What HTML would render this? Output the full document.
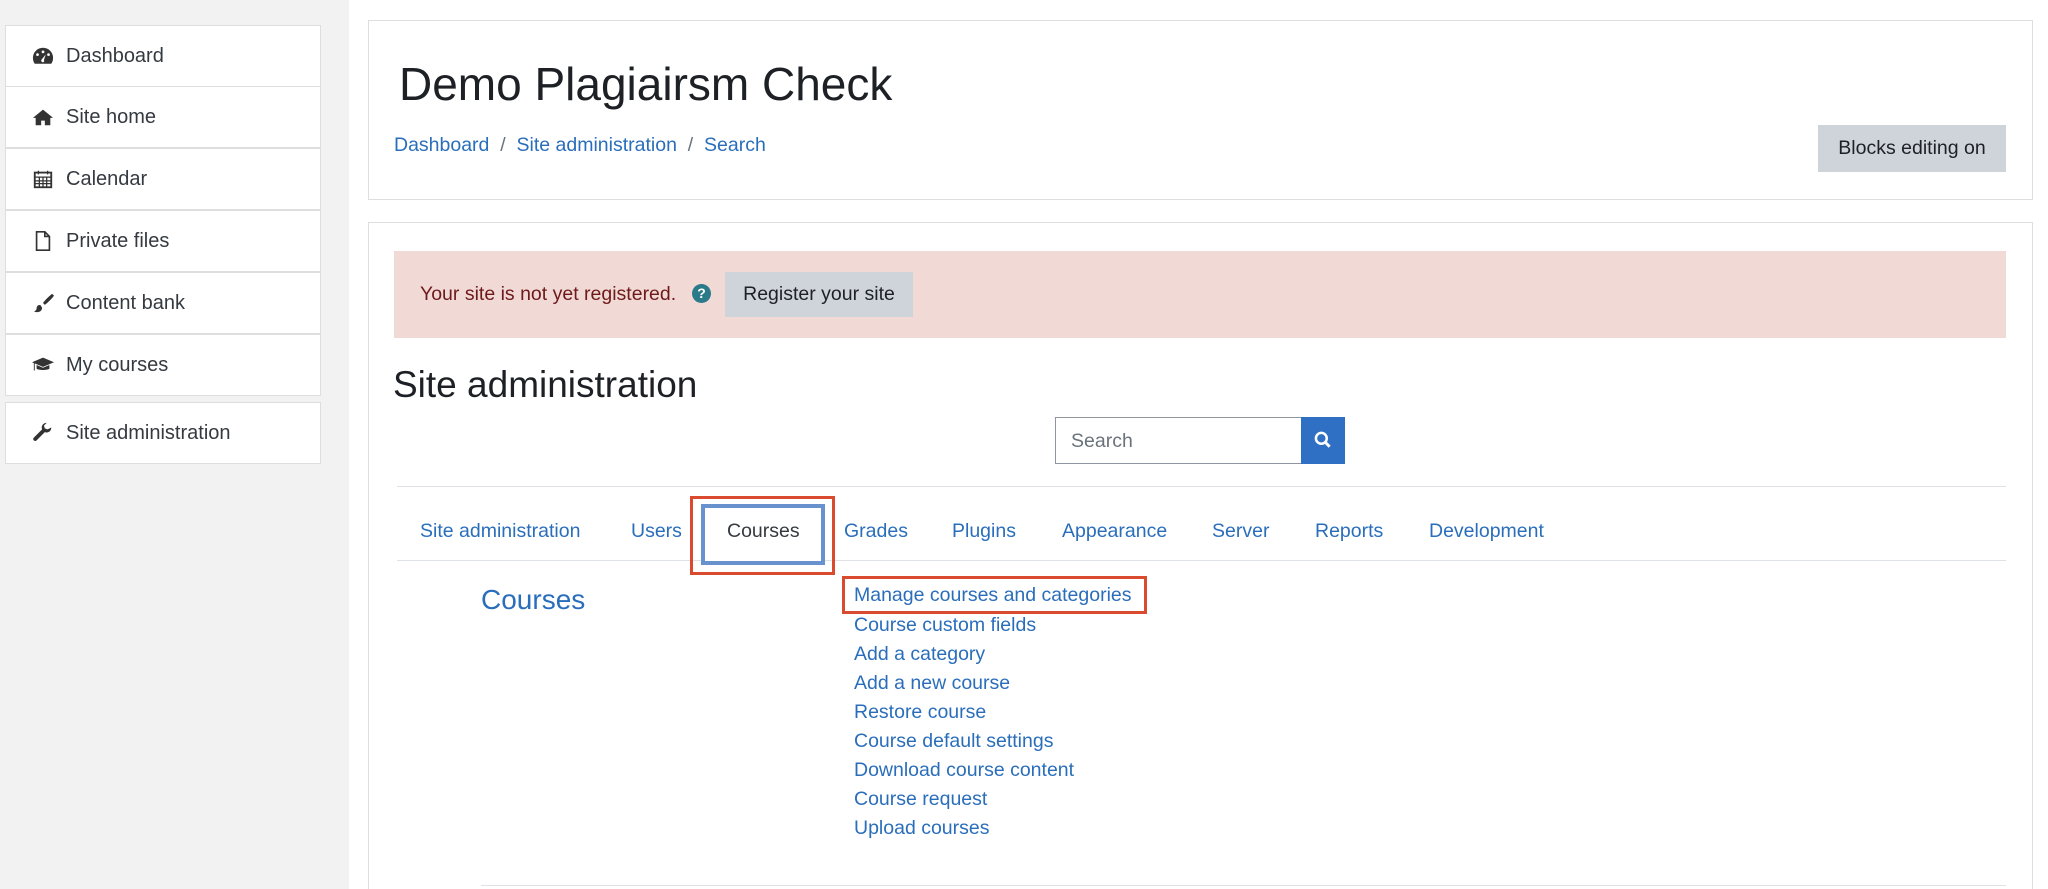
<!DOCTYPE html>
<html><head><meta charset="utf-8"><style>
*{margin:0;padding:0;box-sizing:border-box}
html,body{width:2048px;height:889px;overflow:hidden}
body{background:#fff;font-family:"Liberation Sans",sans-serif;color:#1d2125;position:relative}
.a{position:absolute;white-space:nowrap}
.side{position:absolute;left:0;top:0;width:349px;height:889px;background:#f2f2f2}
.item{position:absolute;left:5px;width:316px;height:62px;background:#fff;border:1px solid #dedede;font-size:20px;color:#343a40;display:flex;align-items:center;padding-left:26px}
.item svg{width:22px;height:22px;margin-right:12px;fill:#333}
.card{position:absolute;border:1px solid #dedede;background:#fff}
.lk{color:#2a6ebb}
.tab{position:absolute;top:520px;font-size:19.5px;color:#2a6ebb}
.ln{position:absolute;left:854px;font-size:19.5px;color:#2a6ebb}
</style></head><body>
<div class="side">
<div class="item" style="top:25px"><svg viewBox="0 0 24 24"><path d="M12 3a11 11 0 0 0-11 11c0 2.5.8 4.7 2 6.5h18c1.2-1.8 2-4 2-6.5A11 11 0 0 0 12 3zm0 3a1.5 1.5 0 1 1 0 3 1.5 1.5 0 0 1 0-3zM6 9a1.5 1.5 0 1 1 0 3 1.5 1.5 0 0 1 0-3zm12 0a1.5 1.5 0 1 1 0 3 1.5 1.5 0 0 1 0-3zm-6 10a2 2 0 0 1-1-3.7l4-5-2 6a2 2 0 0 1-1 2.7z"/></svg>Dashboard</div>
<div class="item" style="top:86px"><svg viewBox="0 0 24 24"><path d="M12 4 1 13h3v8h6v-5h4v5h6v-8h3z"/></svg>Site home</div>
<div class="item" style="top:148px"><svg viewBox="0 0 24 24" fill="none"><rect x="3" y="5" width="18" height="16" stroke="#333" stroke-width="2" fill="none"/><path d="M3 10h18M7 3v4M17 3v4M3 14h18M3 17h18M8 10v11M12 10v11M16 10v11" stroke="#333" stroke-width="1.4"/></svg>Calendar</div>
<div class="item" style="top:210px"><svg viewBox="0 0 24 24"><path d="M5 2h9l5 5v15H5z" fill="none" stroke="#333" stroke-width="1.8"/><path d="M14 2v5h5" fill="none" stroke="#333" stroke-width="1.8"/></svg>Private files</div>
<div class="item" style="top:272px"><svg viewBox="0 0 24 24"><path d="M22 2c-3 2-8 7-10 10l2 2c3-2 8-7 10-10zM9 14c-3 0-4 2-4 4s-2 3-3 3c3 2 9 1 9-4z"/></svg>Content bank</div>
<div class="item" style="top:334px"><svg viewBox="0 0 24 24"><path d="M12 4 0 9l12 5 12-5zM5 12v4c2 2 12 2 14 0v-4l-7 3zM2 10v8h1v-8z"/></svg>My courses</div>
<div class="item" style="top:402px"><svg viewBox="0 0 24 24"><path d="M21 6a5 5 0 0 1-7 5L5 20a2 2 0 0 1-3-3l9-9a5 5 0 0 1 5-7l-3 3 1 3 3 1z"/></svg>Site administration</div>
</div>

<div class="card" style="left:368px;top:20px;width:1665px;height:180px"></div>
<div class="a" style="left:399px;top:57px;font-size:46px;color:#1d2125">Demo Plagiairsm Check</div>
<div class="a" style="left:394px;top:134px;font-size:19.5px;color:#6a737b"><span class="lk">Dashboard</span> &nbsp;/&nbsp; <span class="lk">Site administration</span> &nbsp;/&nbsp; <span class="lk">Search</span></div>
<div class="a" style="left:1818px;top:125px;width:188px;height:47px;background:#ced4da;font-size:19.5px;display:flex;align-items:center;justify-content:center">Blocks editing on</div>

<div class="card" style="left:368px;top:222px;width:1665px;height:680px"></div>
<div class="a" style="left:394px;top:251px;width:1612px;height:87px;background:#f1d9d6"></div>
<div class="a" style="left:420px;top:283px;font-size:19.5px;color:#6e1a1a">Your site is not yet registered.</div>
<div class="a" style="left:692px;top:284px;width:19px;height:19px;border-radius:50%;background:#2b7a8a;color:#fff;font-size:14px;font-weight:bold;text-align:center;line-height:19px">?</div>
<div class="a" style="left:725px;top:272px;width:188px;height:45px;background:#ced4da;font-size:19.5px;display:flex;align-items:center;justify-content:center">Register your site</div>

<div class="a" style="left:393px;top:364px;font-size:37px">Site administration</div>
<div class="a" style="left:1055px;top:417px;width:247px;height:47px;border:1px solid #8f959e;font-size:19.5px;color:#6a737b;padding:12px 15px">Search</div>
<div class="a" style="left:1301px;top:417px;width:44px;height:47px;background:#2f6fc4"><svg viewBox="0 0 24 24" width="20" height="20" style="position:absolute;left:12px;top:13px"><circle cx="10" cy="10" r="6.5" fill="none" stroke="#fff" stroke-width="3"/><path d="M15 15l5 5" stroke="#fff" stroke-width="3.5"/></svg></div>

<div class="a" style="left:397px;top:486px;width:1609px;height:1px;background:#dee2e6"></div>
<div class="a" style="left:397px;top:560px;width:1609px;height:1px;background:#dee2e6"></div>
<div class="tab" style="left:420px">Site administration</div>
<div class="tab" style="left:631px">Users</div>
<div class="a" style="left:701px;top:504px;width:124px;height:61px;background:#fff;border:4px solid #6792cd"></div>
<div class="a" style="left:690px;top:496px;width:145px;height:79px;border:3px solid #d94a2e"></div>
<div class="tab" style="left:727px;color:#343a40">Courses</div>
<div class="tab" style="left:844px">Grades</div>
<div class="tab" style="left:952px">Plugins</div>
<div class="tab" style="left:1062px">Appearance</div>
<div class="tab" style="left:1212px">Server</div>
<div class="tab" style="left:1315px">Reports</div>
<div class="tab" style="left:1429px">Development</div>

<div class="a" style="left:481px;top:584px;font-size:28px;color:#2a6ebb">Courses</div>
<div class="a" style="left:842px;top:576px;width:305px;height:38px;border:3px solid #d94a2e"></div>
<div class="ln" style="top:584px">Manage courses and categories</div>
<div class="ln" style="top:614px">Course custom fields</div>
<div class="ln" style="top:643px">Add a category</div>
<div class="ln" style="top:672px">Add a new course</div>
<div class="ln" style="top:701px">Restore course</div>
<div class="ln" style="top:730px">Course default settings</div>
<div class="ln" style="top:759px">Download course content</div>
<div class="ln" style="top:788px">Course request</div>
<div class="ln" style="top:817px">Upload courses</div>
<div class="a" style="left:481px;top:885px;width:1525px;height:1px;background:#dee2e6"></div>
</body></html>
